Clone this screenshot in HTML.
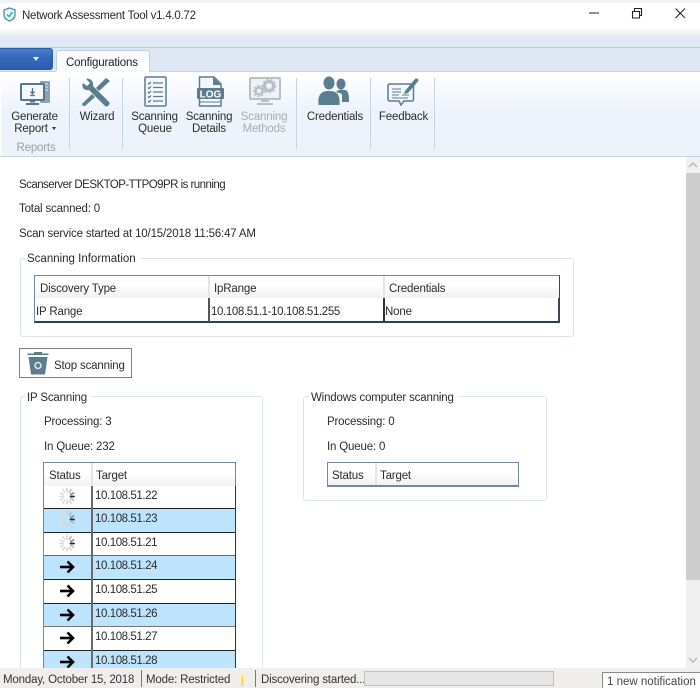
<!DOCTYPE html>
<html><head><meta charset="utf-8"><style>
html,body{margin:0;padding:0;background:#fff}
body{width:700px;height:688px;position:relative;overflow:hidden;font-family:"Liberation Sans",sans-serif;font-size:11.5px;letter-spacing:-.17px;color:#2b2b2b}
.a{position:absolute}
.t{position:absolute;white-space:nowrap;line-height:14px;margin-top:1px}
.c{text-align:center;transform:translateX(-50%)}
.sep{position:absolute;top:78px;height:71px;width:1px;background:#c5d3e2}
.g{position:absolute;border:1px solid #dce3ea;border-radius:3px;box-sizing:border-box}
.lg{position:absolute;background:#fff;padding:0 5px 0 2px;white-space:nowrap;line-height:14px;margin-top:1px}
.hd{position:absolute;background:linear-gradient(#fff,#fff 40%,#f1f2f4);}
.v{position:absolute;width:2px;background:#e2e5ea}
.row{position:absolute;left:44px;width:191px;box-sizing:content-box;border-bottom:1px solid #222}
.row .ip{position:absolute;left:51px;top:3px;line-height:14px;letter-spacing:-.42px}
.row .d{position:absolute;left:47px;top:0;bottom:-1px;width:2px;background:#6a6a6a}
.row svg{position:absolute;left:13px;top:0}
.b{background:#bde4fc}
</style></head><body>
<!-- title bar -->
<div class="a" style="left:0;top:0;width:700px;height:3px;background:#f2f2f2"></div>
<div class="a" style="left:0;top:3px;width:700px;height:24px;background:#fff"></div>
<div class="a" style="left:0;top:27px;width:700px;height:11px;background:linear-gradient(#fff,#dfe8f3)"></div>
<div class="a" style="left:0;top:38px;width:700px;height:9px;background:#dfe8f3"></div>
<div class="a" style="left:0;top:47px;width:700px;height:1px;background:#b9c9dc"></div>
<div class="a" style="left:0;top:48px;width:700px;height:23px;background:#dee7f3"></div>
<div class="a" style="left:0;top:71px;width:700px;height:1px;background:#c2d0e0"></div>
<svg class="a" style="left:3px;top:7px" width="13" height="15" viewBox="0 0 13 15"><path d="M6.500 1 L12 3 V8 C12 11 9 13 6.500 14 C4 13 1 11 1 8 V3 Z" fill="#e8f6f4" stroke="#4d93b5" stroke-width="1.400"/><path d="M4 7.500 L6 9.500 L9.500 5" fill="none" stroke="#3fae8c" stroke-width="1.500"/></svg>
<div class="t" style="left:22px;top:8px;letter-spacing:-.25px">Network Assessment Tool v1.4.0.72</div>
<svg class="a" style="left:585px;top:8px" width="110" height="18" viewBox="0 0 110 18"><path d="M4 5H14" stroke="#222" stroke-width="1"/><path d="M47.500 3.500h7v6.500h-7z M49.500 3V0.500h7v7H55" fill="none" stroke="#222" stroke-width="1.100"/><path d="M90.500 0.500L100 10M100 0.500L90.500 10" stroke="#222" stroke-width="1" fill="none"/></svg>
<!-- app button & tab -->
<div class="a" style="left:0;top:48px;width:53px;height:22px;box-sizing:border-box;border:1px solid #2a5ea8;border-left:0;border-radius:0 3px 3px 0;background:linear-gradient(#4a7cc9,#3567b8 50%,#2a5dae)"></div>
<div class="a" style="left:33px;top:57px;width:0;height:0;border-left:3.500px solid transparent;border-right:3.500px solid transparent;border-top:4px solid #e8eff8"></div>
<div class="a" style="left:56px;top:50px;width:94px;height:23px;box-sizing:border-box;border:1px solid #c3d0df;border-bottom:0;border-radius:3px 3px 0 0;background:linear-gradient(#f6f9fd,#fff)"></div>
<div class="t" style="left:66px;top:55px;color:#222">Configurations</div>
<!-- ribbon -->
<div class="a" style="left:1px;top:72px;width:699px;height:84px;background:linear-gradient(#fff,#eef3fb 45%,#edf2fa)"></div>
<div class="a" style="left:56px;top:71px;width:93px;height:2px;background:#fff"></div>
<div class="a" style="left:0;top:156px;width:700px;height:1px;background:#c5d4e5"></div>
<div class="sep" style="left:69px"></div><div class="sep" style="left:122px"></div><div class="sep" style="left:296px"></div><div class="sep" style="left:370px"></div><div class="sep" style="left:434px"></div>
<!-- ribbon icons -->
<svg class="a" style="left:20px;top:80px" width="32" height="26" viewBox="0 0 32 26"><rect x="20" y="1" width="10" height="22" rx="1" fill="#8aa2b2"/><path d="M22 4h6M22 7h6M22 10h6" stroke="#dfe8ee"/><rect x="1" y="4" width="23" height="16" rx="1" fill="#f4f8fb" stroke="#567688" stroke-width="2"/><path d="M12.500 8v5M10.500 11.500l2 2.500 2-2.500M10 15.500h5" stroke="#567688" stroke-width="1.300" fill="none"/><path d="M10 20h5v2.500h-5z" fill="#567688"/><path d="M6 24h13" stroke="#567688" stroke-width="2"/></svg>
<svg class="a" style="left:80px;top:77px" width="32" height="31" viewBox="0 0 32 31"><path d="M3 6 C1 10 4 14 9 13 L25 29 C27 31 31 27 29 25 L13 9 C14 4 10 1 6 2 L10 6 L7 9 Z" fill="#5c7c8f"/><path d="M30 4 L26 1 L16 11 L19 14 Z" fill="#5c7c8f"/><path d="M12 17 L2 27 L3 29 L5 29 L15 20 Z" fill="#5c7c8f"/></svg>
<svg class="a" style="left:144px;top:76px" width="24" height="31" viewBox="0 0 24 31"><rect x="1" y="1" width="21" height="29" rx="1" fill="#f5f8fb" stroke="#5c7c8f" stroke-width="1.500"/><path d="M4 7l1 1 2-2M4 11.500l1 1 2-2M4 16l1 1 2-2M4 20.500l1 1 2-2M4 25l1 1 2-2" stroke="#44606f" fill="none"/><path d="M9 7h10M9 11.500h10M9 16h10M9 20.500h10M9 25h10" stroke="#5c7c8f" stroke-width="1.200"/></svg>
<svg class="a" style="left:197px;top:76px" width="27" height="31" viewBox="0 0 27 31"><path d="M2.500 1H17L24 8V30H2.500Z" fill="#f4f7fa" stroke="#5c7c8f" stroke-width="1.500"/><path d="M16 1V9H24Z" fill="#5c7c8f"/><rect x="0" y="12" width="27" height="11" rx="1" fill="#5c7c8f"/><path d="M3 26h20" stroke="#5c7c8f" stroke-width="1"/><text x="13.500" y="21.500" font-family="Liberation Sans" font-size="10" font-weight="bold" fill="#fff" text-anchor="middle" style="letter-spacing:0">LOG</text></svg>
<svg class="a" style="left:249px;top:77px" width="32" height="30" viewBox="0 0 32 30"><rect x="1" y="1" width="30" height="21" rx="1" fill="#eef2f6" stroke="#b6c0c7" stroke-width="2"/><path d="M12 22h8v3h-8zM8 26h16v2H8z" fill="#b6c0c7"/><circle cx="20" cy="9" r="4.500" fill="none" stroke="#b6c0c7" stroke-width="3"/><circle cx="10" cy="14" r="3.500" fill="none" stroke="#b6c0c7" stroke-width="2.500"/><circle cx="20" cy="9" r="6.500" fill="none" stroke="#b6c0c7" stroke-width="1.500" stroke-dasharray="2 2"/><circle cx="10" cy="14" r="5.500" fill="none" stroke="#b6c0c7" stroke-width="1.300" stroke-dasharray="2 2"/></svg>
<svg class="a" style="left:318px;top:76px" width="32" height="30" viewBox="0 0 32 30"><ellipse cx="23" cy="8" rx="4.500" ry="5.500" fill="#5c7c8f"/><path d="M18 16 C20 13 27 13 29 15 C31 17 31 22 31 26 H24 V18Z" fill="#5c7c8f"/><ellipse cx="11" cy="7" rx="5.500" ry="6.500" fill="#5c7c8f"/><path d="M0.500 29 C0 22 1 18 5 16 C8 14.500 14 14.500 17 16 C21 18 22 22 21.500 29 Z" fill="#5c7c8f"/></svg>
<svg class="a" style="left:387px;top:77px" width="32" height="30" viewBox="0 0 32 30"><path d="M3 7H25Q26.500 7 26.500 9V22Q26.500 24 25 24H17L14 28L12 24H3Q1 24 1 22V9Q1 7 3 7Z" fill="#f4f7fa" stroke="#5c7c8f" stroke-width="1.500"/><path d="M5 12h9M5 15h9M5 18h7M15 18h7M5 21h16" stroke="#5c7c8f" stroke-width="1"/><path d="M18 14 L28 2 Q29.500 1 31 2 Q32 3.500 30.500 5 L21 16 L17 17Z" fill="#5c7c8f"/></svg>
<!-- ribbon text -->
<div class="t c" style="left:34.500px;top:109px">Generate</div>
<div class="t c" style="left:31px;top:121px">Report</div>
<div class="a" style="left:52px;top:127px;width:0;height:0;border-left:2.500px solid transparent;border-right:2.500px solid transparent;border-top:3px solid #333"></div>
<div class="t c" style="left:36px;top:140px;color:#9aa0a6">Reports</div>
<div class="t c" style="left:97px;top:109px">Wizard</div>
<div class="t c" style="left:154.500px;top:109px">Scanning</div><div class="t c" style="left:155px;top:121px">Queue</div>
<div class="t c" style="left:209px;top:109px">Scanning</div><div class="t c" style="left:209px;top:121px">Details</div>
<div class="t c" style="left:264px;top:109px;color:#a8adb2">Scanning</div><div class="t c" style="left:264px;top:121px;color:#a8adb2">Methods</div>
<div class="t c" style="left:335px;top:109px">Credentials</div>
<div class="t c" style="left:403.500px;top:109px">Feedback</div>
<!-- status text -->
<div class="t" style="left:19px;top:177px;letter-spacing:-.54px">Scanserver DESKTOP-TTPO9PR is running</div>
<div class="t" style="left:19px;top:201px">Total scanned: 0</div>
<div class="t" style="left:19px;top:226px">Scan service started at 10/15/2018 11:56:47 AM</div>
<!-- scanning information -->
<div class="g" style="left:20px;top:258px;width:554px;height:79px"></div>
<div class="lg" style="left:25px;top:251px;letter-spacing:0">Scanning Information</div>
<div class="a" style="left:34px;top:275px;width:526px;height:48px;box-sizing:border-box;border:1px solid #7189a6;border-bottom:2px solid #2e3f55;border-right:2px solid #3a4658"></div>
<div class="hd" style="left:35px;top:276px;width:524px;height:22px"></div>
<div class="v" style="left:208px;top:276px;height:22px"></div><div class="v" style="left:383px;top:276px;height:22px"></div>
<div class="a" style="left:208px;top:298px;width:2px;height:24px;background:#555"></div>
<div class="a" style="left:383px;top:298px;width:2px;height:24px;background:#333"></div>
<div class="t" style="left:40px;top:281px">Discovery Type</div><div class="t" style="left:214px;top:281px">IpRange</div><div class="t" style="left:389px;top:281px">Credentials</div>
<div class="t" style="left:36px;top:304px">IP Range</div><div class="t" style="left:211px;top:304px;letter-spacing:-.37px">10.108.51.1-10.108.51.255</div><div class="t" style="left:385px;top:304px">None</div>
<!-- stop button -->
<div class="a" style="left:19px;top:348px;width:113px;height:30px;box-sizing:border-box;border:1px solid #7f7f7f;background:#fff"></div>
<svg class="a" style="left:27px;top:351px" width="22" height="24" viewBox="0 0 22 24"><path d="M0.500 2.500H21.500V4H0.500Z M7 1h8v1.500H7z" fill="#5c7c8f"/><path d="M1.500 6H20.500L18 23.500H4Z" fill="#5c7c8f"/><circle cx="11" cy="14.500" r="3" fill="none" stroke="#dbe3e8" stroke-width="1.600"/></svg>
<div class="t" style="left:54px;top:358px">Stop scanning</div>
<!-- IP scanning -->
<div class="g" style="left:20px;top:396px;width:243px;height:290px"></div>
<div class="lg" style="left:25px;top:390px">IP Scanning</div>
<div class="t" style="left:44px;top:414px">Processing: 3</div>
<div class="t" style="left:44px;top:439px">In Queue: 232</div>
<div class="a" style="left:43px;top:462px;width:193px;height:24px;border:1px solid #7189a6;border-bottom:0;box-sizing:border-box;background:linear-gradient(#fff,#fff 40%,#f1f2f4)"></div>
<div class="v" style="left:91px;top:463px;height:23px"></div>
<div class="t" style="left:49px;top:468px">Status</div><div class="t" style="left:96px;top:468px">Target</div>
<div class="a" style="left:43px;top:486px;width:1px;height:182px;background:#7189a6"></div>
<svg width="0" height="0" style="position:absolute"><defs>
<g id="sp" fill="none" stroke-width="1.700" stroke-linecap="round"><path d="M10 2.500V6" stroke="#d4d4d4"/><path d="M14 3.500L12.500 6.500" stroke="#bbb"/><path d="M6 3.500L7.500 6.500" stroke="#ddd"/><path d="M16.500 7L13.800 8.500" stroke="#888"/><path d="M13.500 10.500H17" stroke="#222"/><path d="M14 12.500L16.500 14" stroke="#bbb"/><path d="M12.500 14.500L14 17" stroke="#d0d0d0"/><path d="M10 15V18" stroke="#d4d4d4"/><path d="M7.500 14.500L6 17" stroke="#d4d4d4"/><path d="M6 12.500L3.500 14" stroke="#ddd"/><path d="M3 10.500H6.500" stroke="#ddd"/><path d="M3.500 7L6.200 8.500" stroke="#ddd"/></g>
<g id="ar" fill="none" stroke="#000" stroke-width="2.600"><path d="M3 11H16"/><path d="M10.500 5.500L16 11L10.500 16.500"/></g>
</defs></svg>
<div class="row" style="top:486px;height:22px"><div class="d"></div><svg width="20" height="21"><use href="#sp"/></svg><div class="ip">10.108.51.22</div></div>
<div class="row b" style="top:509px;height:23px"><div class="d"></div><svg width="20" height="21"><use href="#sp"/></svg><div class="ip">10.108.51.23</div></div>
<div class="row" style="top:533px;height:22px;border-bottom-color:#666"><div class="d"></div><svg width="20" height="21"><use href="#sp"/></svg><div class="ip">10.108.51.21</div></div>
<div class="row b" style="top:556px;height:23px"><div class="d"></div><svg width="20" height="21"><use href="#ar"/></svg><div class="ip">10.108.51.24</div></div>
<div class="row" style="top:580px;height:23px"><div class="d"></div><svg width="20" height="21"><use href="#ar"/></svg><div class="ip">10.108.51.25</div></div>
<div class="row b" style="top:604px;height:22px;border-bottom-color:#777"><div class="d"></div><svg width="20" height="21"><use href="#ar"/></svg><div class="ip">10.108.51.26</div></div>
<div class="row" style="top:627px;height:23px"><div class="d"></div><svg width="20" height="21"><use href="#ar"/></svg><div class="ip">10.108.51.27</div></div>
<div class="row b" style="top:651px;height:17px;border:0"><div class="d" style="bottom:0"></div><svg width="20" height="17"><use href="#ar"/></svg><div class="ip">10.108.51.28</div></div>
<div class="a" style="left:235px;top:486px;width:1px;height:182px;background:#333"></div>
<!-- Windows computer scanning -->
<div class="g" style="left:303px;top:396px;width:244px;height:105px"></div>
<div class="lg" style="left:309px;top:390px">Windows computer scanning</div>
<div class="t" style="left:327px;top:414px">Processing: 0</div>
<div class="t" style="left:327px;top:439px">In Queue: 0</div>
<div class="a" style="left:327px;top:462px;width:192px;height:25px;box-sizing:border-box;border:1px solid #7189a6;border-bottom:2px solid #7189a6;background:linear-gradient(#fff,#fff 40%,#f1f2f4)"></div>
<div class="v" style="left:375px;top:463px;height:22px"></div>
<div class="t" style="left:332px;top:468px">Status</div><div class="t" style="left:380px;top:468px">Target</div>
<!-- scrollbar -->
<div class="a" style="left:686px;top:157px;width:14px;height:511px;background:#f0f0f0"></div>
<div class="a" style="left:686px;top:173px;width:14px;height:407px;background:#cdcdcd"></div>
<svg class="a" style="left:686px;top:157px" width="14" height="16"><path d="M3 10L7 6L11 10" fill="none" stroke="#b8b8b8" stroke-width="1.500"/></svg>
<svg class="a" style="left:686px;top:652px" width="14" height="16"><path d="M3 6L7 10L11 6" fill="none" stroke="#b8b8b8" stroke-width="1.500"/></svg>
<!-- status bar -->
<div class="a" style="left:0;top:668px;width:700px;height:20px;background:#f0eded"></div>
<div class="t" style="left:3px;top:672px;color:#333">Monday, October 15, 2018</div>
<div class="a" style="left:141px;top:670px;width:1px;height:17px;background:#777"></div>
<div class="t" style="left:146px;top:672px;color:#333">Mode: Restricted</div>
<svg class="a" style="left:236px;top:671px" width="13" height="15" viewBox="0 0 13 15"><path d="M1 2L2.500 3.500M12 2L10.500 3.500M6.500 0V1.500M0 6H1.500M11.500 6H13" stroke="#f8e6a6"/><path d="M6.500 2C4 2 3 3.500 3 5.500C3 8 5 9 5.300 12H7.700C8 9 10 8 10 5.500C10 3.500 9 2 6.500 2Z" fill="#fbeeb8"/><path d="M5 12.500H8V14.500H5Z" fill="#f0cf5f"/><path d="M6.500 6V12" stroke="#eebf3a"/></svg>
<div class="a" style="left:255px;top:670px;width:1px;height:17px;background:#777"></div>
<div class="t" style="left:261px;top:672px;color:#333">Discovering started...</div>
<div class="a" style="left:364px;top:671px;width:190px;height:15px;box-sizing:border-box;border:1px solid #bcc4bc;background:#e6e6e6"></div>
<div class="a" style="left:602px;top:672px;width:98px;height:16px;box-sizing:border-box;border:1px solid #8a8a8a;border-right:0;border-bottom:0;background:#fff"></div>
<div class="t" style="left:607px;top:674px;color:#444;letter-spacing:0">1 new notification</div>
</body></html>
